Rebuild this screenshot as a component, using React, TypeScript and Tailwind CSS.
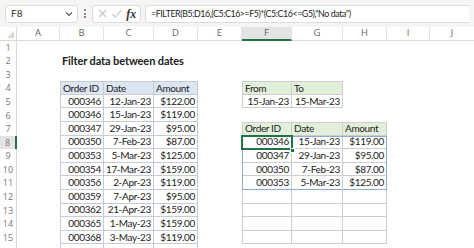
import React from "react";

type Align = "left" | "right";

type CellData = {
    text?: string;
    align?: Align;
    bold?: boolean;
    fill?: string;
    table?: "blue" | "green";
    first?: boolean;
    top?: boolean;
};

const columns = [
    { key: "A", w: "w-[43px]" },
    { key: "B", w: "w-[44px]" },
    { key: "C", w: "w-[50px]" },
    { key: "D", w: "w-[44px]" },
    { key: "E", w: "w-[44px]" },
    { key: "F", w: "w-[50px]" },
    { key: "G", w: "w-[51px]" },
    { key: "H", w: "w-[44px]" },
    { key: "I", w: "w-[43px]" },
    { key: "J", w: "w-[44px]" },
];

const orders = [
    ["000346", "12-Jan-23", "$122.00"],
    ["000346", "15-Jan-23", "$119.00"],
    ["000347", "29-Jan-23", "$95.00"],
    ["000350", "7-Feb-23", "$87.00"],
    ["000353", "5-Mar-23", "$125.00"],
    ["000354", "17-Mar-23", "$159.00"],
    ["000356", "2-Apr-23", "$119.00"],
    ["000359", "7-Apr-23", "$95.00"],
    ["000362", "21-Apr-23", "$159.00"],
    ["000365", "1-May-23", "$159.00"],
    ["000368", "3-May-23", "$119.00"],
];

const results = [
    ["000346", "15-Jan-23", "$119.00"],
    ["000347", "29-Jan-23", "$95.00"],
    ["000350", "7-Feb-23", "$87.00"],
    ["000353", "5-Mar-23", "$125.00"],
];

function getCell(row: number, col: string): CellData {
    if (row === 2 && col === "B") return { text: "Filter data between dates", bold: true };

    // left table B4:D16
    const left = ["B", "C", "D"];
    const li = left.indexOf(col);
    if (li >= 0 && row >= 4 && row <= 16) {
        const base = { table: "blue" as const, first: li === 0, top: row === 4 };
        if (row === 4) return { ...base, text: ["Order ID", "Date", "Amount"][li], fill: "bg-[#dce5f2]" };
        const d = orders[row - 5];
        return { ...base, text: d ? d[li] : "", align: "right" };
    }

    // criteria F4:G5
    const crit = ["F", "G"];
    const ci = crit.indexOf(col);
    if (ci >= 0 && (row === 4 || row === 5)) {
        const base = { table: "green" as const, first: ci === 0, top: row === 4 };
        if (row === 4) return { ...base, text: ["From", "To"][ci], fill: "bg-[#e2efda]" };
        return { ...base, text: ["15-Jan-23", "15-Mar-23"][ci], align: "right" };
    }

    // results F7:H15
    const res = ["F", "G", "H"];
    const ri = res.indexOf(col);
    if (ri >= 0 && row >= 7 && row <= 15) {
        const base = { table: "green" as const, first: ri === 0, top: row === 7 };
        if (row === 7) return { ...base, text: ["Order ID", "Date", "Amount"][ri], fill: "bg-[#e2efda]" };
        const d = results[row - 8];
        return { ...base, text: d ? d[ri] : "", align: "right" };
    }

    return {};
}

function Cell({ row, col, w }: { row: number; col: string; w: string }) {
    const c = getCell(row, col);
    const border =
        c.table === "blue"
            ? "border-r border-b border-[#c5ccd8]"
            : c.table === "green"
              ? "border-r border-b border-[#cdcdcd]"
              : "";
    return (
        <div
            className={`${w} h-full shrink-0 flex items-center overflow-visible whitespace-nowrap px-[2px] ${border} ${
                c.first ? "border-l" : ""
            } ${c.top ? "border-t" : ""} ${c.fill ?? ""} ${c.align === "right" ? "justify-end" : "justify-start"} ${
                c.bold ? "font-bold text-[11px] tracking-[-0.1px]" : ""
            }`}
        >
            {c.text}
        </div>
    );
}

function FormulaBar() {
    return (
        <div className="h-[27px] flex items-center gap-[3px] bg-[#f5f5f5] px-[5px]">
            <div className="w-[73px] h-[18px] flex items-center justify-between rounded-[3px] border border-[#dcdcdc] bg-white pl-[5px] pr-[4px] text-[10px] text-[#333]">
                <span>F8</span>
                <svg width="8" height="6" viewBox="0 0 8 6">
                    <path d="M1 1.5 L4 4.5 L7 1.5" stroke="#555" strokeWidth="1.1" fill="none" />
                </svg>
            </div>
            <div className="w-[8px] flex flex-col items-center gap-[1.5px]">
                <span className="w-[2px] h-[2px] rounded-full bg-[#666]" />
                <span className="w-[2px] h-[2px] rounded-full bg-[#666]" />
                <span className="w-[2px] h-[2px] rounded-full bg-[#666]" />
            </div>
            <div className="w-[49px] h-[18px] flex items-center justify-around rounded-[3px] border border-[#dcdcdc] bg-white px-[2px]">
                <svg width="11" height="11" viewBox="0 0 11 11">
                    <path d="M2 2 L9 9 M9 2 L2 9" stroke="#c4c4c4" strokeWidth="1.1" />
                </svg>
                <svg width="12" height="11" viewBox="0 0 12 11">
                    <path d="M1.5 6 L4.5 9 L10.5 2" stroke="#c4c4c4" strokeWidth="1.1" fill="none" />
                </svg>
                <span className="font-['Liberation_Serif',serif] italic text-[12px] font-bold text-[#333] leading-none">
                    fx
                </span>
            </div>
            <div className="flex-1 h-[18px] ml-[1px] flex items-center rounded-l-[3px] border border-r-0 border-[#dcdcdc] bg-white pl-[5px] text-[8.8px] text-[#222] tracking-[-0.4px] whitespace-nowrap overflow-hidden">
                =FILTER(B5:D16,(C5:C16&gt;=F5)*(C5:C16&lt;=G5),"No data")
            </div>
        </div>
    );
}

function ColumnHeaders() {
    return (
        <div className="h-[13.5px] flex bg-white text-[#666] text-[9.5px] font-['Open_Sans',sans-serif]">
            <div className="w-[17px] h-full shrink-0 relative border-r border-b border-[#dadada]">
                <div className="absolute right-[2px] bottom-[2px] w-0 h-0 border-l-[7px] border-l-transparent border-b-[7px] border-b-[#d6d6d6]" />
            </div>
            {columns.map((c) => (
                <div
                    key={c.key}
                    className={`${c.w} h-full shrink-0 flex items-center justify-center ${
                        c.key === "F" ? "bg-[#e4e4e4] border-b-2 border-[#217346]" : "border-b border-[#dadada]"
                    } ${c.key !== "J" ? "border-r border-r-[#e2e2e2]" : ""}`}
                >
                    {c.key}
                </div>
            ))}
        </div>
    );
}

export default function App() {
    // row 16 is only a sliver at the bottom edge, so its number is left out
    const rows = Array.from({ length: 16 }, (_, i) => i + 1);

    return (
        <div className="w-[474px] h-[248px] overflow-hidden bg-white font-['Lato',sans-serif] text-[#222]">
            <FormulaBar />
            <ColumnHeaders />
            <div className="relative">
                {rows.map((r) => (
                    <div key={r} className="h-[13.6px] flex text-[10px] tracking-[-0.35px]">
                        <div
                            className={`w-[17px] h-full shrink-0 flex items-center justify-center font-['Open_Sans',sans-serif] text-[9px] tracking-normal text-[#777] ${
                                r === 8 ? "bg-[#e4e4e4] border-r-2 border-[#217346]" : "border-r border-[#dadada]"
                            }`}
                        >
                            {r < 16 ? r : ""}
                        </div>
                        {columns.map((c) => (
                            <Cell key={c.key} row={r} col={c.key} w={c.w} />
                        ))}
                    </div>
                ))}

                {/* spill range outline */}
                <div className="absolute left-[242px] top-[95.2px] w-[145px] h-[54.4px] border border-[#8eaadb] pointer-events-none" />
                {/* active cell F8 */}
                <div className="absolute left-[241px] top-[94.2px] w-[52px] h-[15.6px] border-2 border-[#217346] pointer-events-none" />
                <div className="absolute left-[290px] top-[107px] w-[5px] h-[5px] bg-[#217346] border border-white pointer-events-none" />
            </div>
        </div>
    );
}
